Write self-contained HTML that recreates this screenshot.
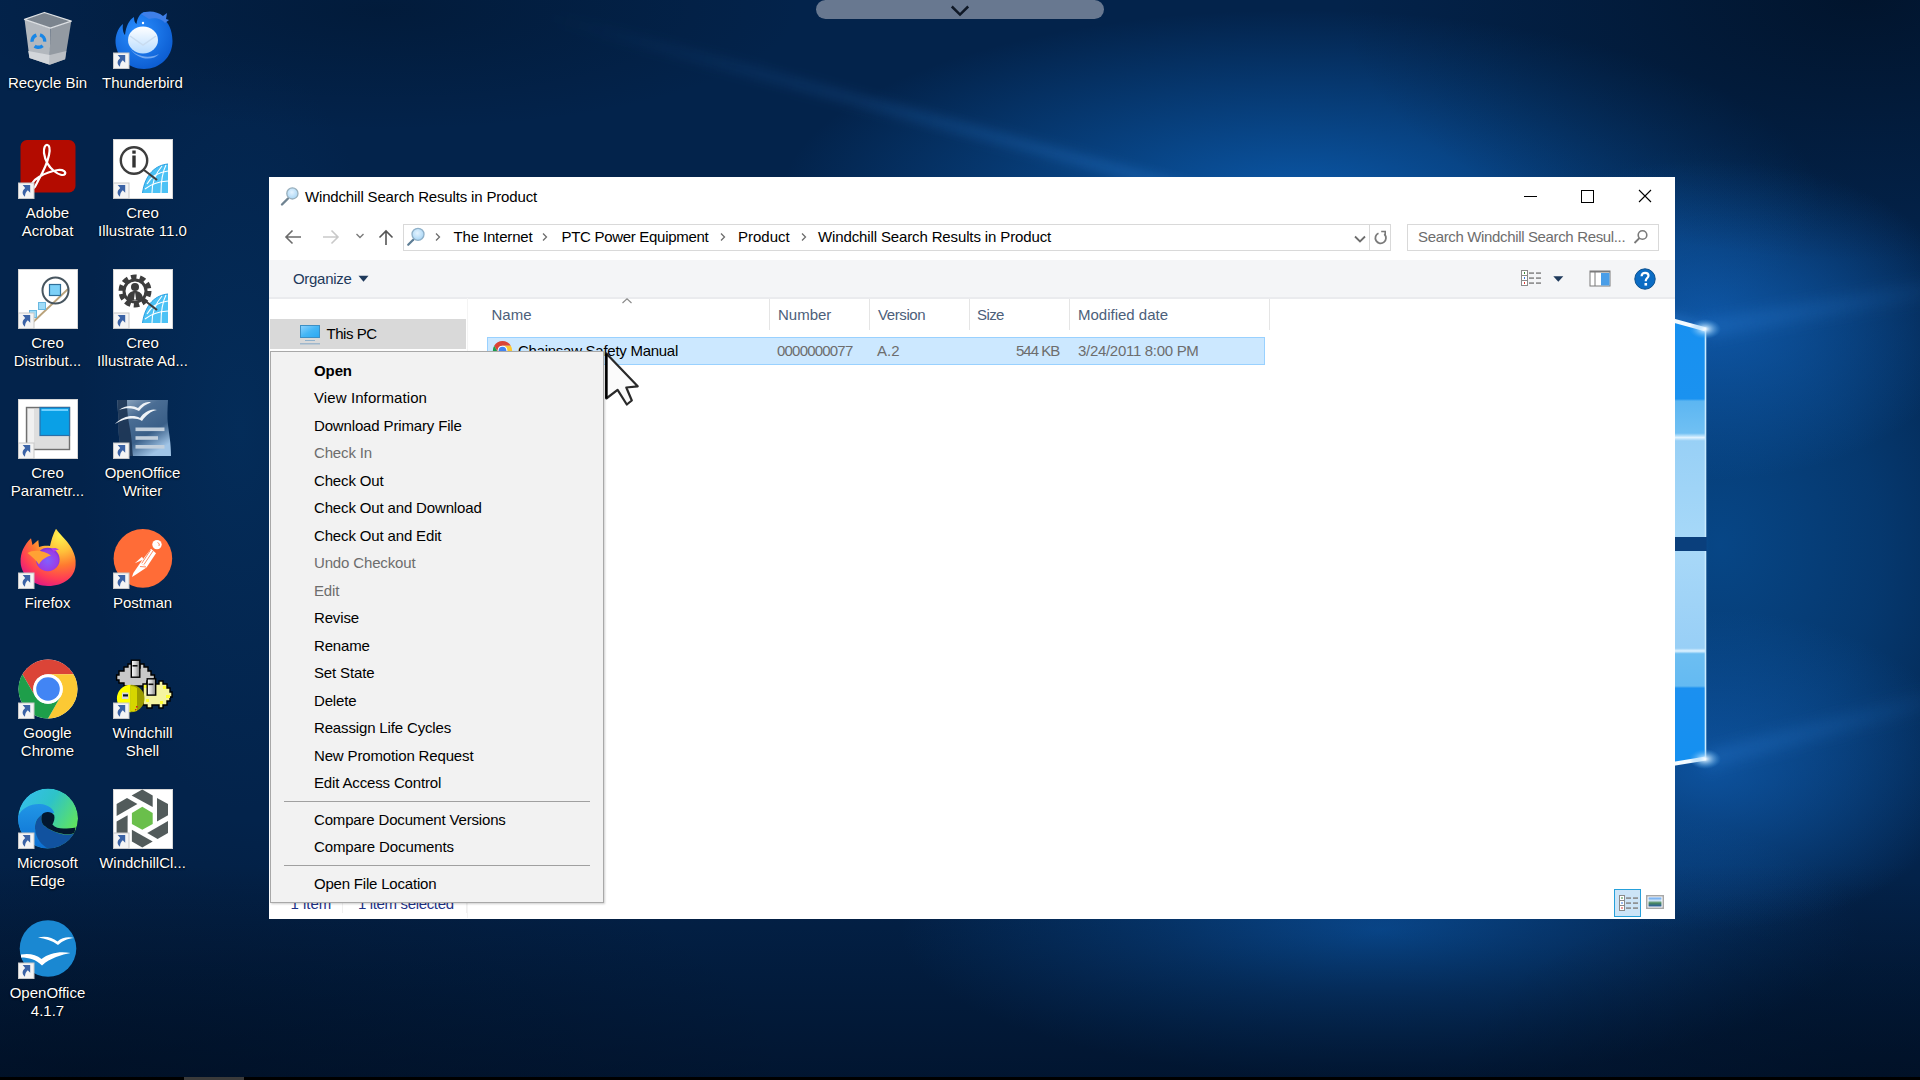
<!DOCTYPE html>
<html><head><meta charset="utf-8">
<style>
*{margin:0;padding:0;box-sizing:border-box}
html,body{width:1920px;height:1080px;overflow:hidden}
body{position:relative;font-family:"Liberation Sans",sans-serif;font-size:15px;color:#000;
background:#021a38;}
.abs{position:absolute}
.t{position:absolute;white-space:nowrap;line-height:1;font-size:15px}
.lbl{position:absolute;width:100px;text-align:center;color:#fff;font-size:15px;line-height:1;white-space:nowrap;text-shadow:0 1px 2px rgba(0,0,0,.9),0 0 1px #000}
.ico{position:absolute;width:60px;height:60px}
#topbar{left:816px;top:0px;width:288px;height:19px;border-radius:9.5px;background:#687890}
#win{left:269px;top:177px;width:1406px;height:742px;background:#fff}
#menu{left:270px;top:351px;width:334px;height:552px;background:#f2f2f2;border:1px solid #a8a8a8;box-shadow:1px 1px 2px rgba(0,0,0,.2)}
.sep{position:absolute;left:284px;width:306px;height:1px;background:#a0a0a0}
.vsep{position:absolute;top:299px;width:1px;height:31px;background:#e5e5e5}
</style></head>
<body>
<div class="abs" style="left:0;top:0;width:1920px;height:1080px;background:
 linear-gradient(to bottom, rgba(0,10,26,0) 80%, rgba(0,10,26,.55) 100%),
 radial-gradient(ellipse 520px 260px at 1860px 0px, rgba(1,18,40,.85), rgba(1,18,40,.4) 50%, rgba(1,18,40,0) 100%),
 radial-gradient(ellipse 260px 160px at 1710px 320px, rgba(18,100,190,.7), rgba(18,100,190,0) 100%),
 radial-gradient(ellipse 260px 160px at 1710px 770px, rgba(18,100,190,.6), rgba(18,100,190,0) 100%),
 radial-gradient(ellipse 700px 260px at 80px 1070px, rgba(1,18,40,.6), rgba(1,18,40,0) 100%),
 radial-gradient(ellipse 420px 200px at 1880px 1080px, rgba(1,18,40,.6), rgba(1,18,40,0) 100%),
 radial-gradient(ellipse 420px 120px at 380px 10px, rgba(1,22,48,.6), rgba(1,22,48,0) 100%),
 radial-gradient(ellipse 520px 190px at 1300px 200px, rgba(11,88,168,1), rgba(11,88,168,.55) 45%, rgba(11,88,168,0) 100%),
 radial-gradient(ellipse 480px 150px at 1380px 930px, rgba(10,80,156,1), rgba(10,80,156,.5) 45%, rgba(10,80,156,0) 100%),
 radial-gradient(ellipse 320px 400px at 1720px 545px, rgba(7,70,134,1), rgba(7,70,134,.6) 50%, rgba(7,70,134,0) 100%),
 radial-gradient(ellipse 160px 380px at 240px 430px, rgba(4,48,95,.7), rgba(4,48,95,0) 100%),
 #03234b;"></div>
<div class="abs" style="left:506px;top:324px;width:1200px;height:10px;transform-origin:100% 50%;transform:rotate(15.1deg);background:linear-gradient(to right, rgba(42,122,208,0), rgba(42,122,208,.45) 60%, rgba(42,122,208,.6));filter:blur(6px)"></div>
<div class="abs" style="left:1706px;top:323px;width:230px;height:12px;transform-origin:0 50%;transform:rotate(-10deg);background:linear-gradient(to right, rgba(42,122,208,.5), rgba(42,122,208,.1));filter:blur(8px)"></div>
<div class="abs" style="left:1706px;top:754px;width:230px;height:12px;transform-origin:0 50%;transform:rotate(-15deg);background:linear-gradient(to right, rgba(42,122,208,.5), rgba(42,122,208,.1));filter:blur(8px)"></div>
<div class="abs" style="left:0;top:1077px;width:1920px;height:3px;background:#000"></div>
<div class="abs" style="left:184px;top:1077px;width:60px;height:3px;background:#3a3a3a"></div>
<!-- windows logo sliver -->
<div class="abs" style="left:1670px;top:300px;width:60px;height:480px;background:radial-gradient(ellipse 40px 230px at 0px 240px, rgba(30,130,230,.6), rgba(30,130,230,0))"></div>
<svg class="abs" style="left:1660px;top:300px" width="70" height="480" viewBox="0 0 70 480">
<defs>
<linearGradient id="wp1" x1="0" y1="0" x2="0" y2="1">
<stop offset="0" stop-color="#1790f0"/><stop offset=".375" stop-color="#1a92f0"/><stop offset=".385" stop-color="#5cb6f2"/><stop offset=".53" stop-color="#70c0f3"/><stop offset=".55" stop-color="#e0f3ff"/><stop offset=".565" stop-color="#98d0f6"/><stop offset="1" stop-color="#a6d8f8"/></linearGradient>
<linearGradient id="wp2" x1="0" y1="0" x2="0" y2="1">
<stop offset="0" stop-color="#a8d8f8"/><stop offset=".45" stop-color="#98cff6"/><stop offset=".463" stop-color="#e0f3ff"/><stop offset=".476" stop-color="#6cbef2"/><stop offset=".625" stop-color="#64baf2"/><stop offset=".635" stop-color="#1b90f0"/><stop offset="1" stop-color="#1490f0"/></linearGradient>
<radialGradient id="glow" cx="50%" cy="50%" r="50%"><stop offset="0" stop-color="#fff" stop-opacity="1"/><stop offset=".3" stop-color="#bfe4ff" stop-opacity=".7"/><stop offset="1" stop-color="#4aa8f0" stop-opacity="0"/></radialGradient>
</defs>
<rect x="0" y="236" width="46.5" height="16" fill="#0a3f7c"/>
<path d="M0 16L46 29V237H0Z" fill="url(#wp1)"/>
<path d="M0 251H46V459L0 467Z" fill="url(#wp2)"/>
<path d="M0 17L46 29.5" stroke="#f4fbff" stroke-width="4"/>
<path d="M0 466L46 458.5" stroke="#f4fbff" stroke-width="4"/>
<line x1="45.5" y1="29" x2="45.5" y2="237" stroke="#c8ebff" stroke-width="1.6"/>
<line x1="45.5" y1="251" x2="45.5" y2="459" stroke="#c8ebff" stroke-width="1.6"/>
<ellipse cx="45" cy="29" rx="16" ry="10" fill="url(#glow)"/>
<ellipse cx="45" cy="459" rx="16" ry="10" fill="url(#glow)"/>
</svg>
<svg class="abs" style="left:17.5px;top:9px;overflow:visible" width="60" height="60" viewBox="0 0 60 60">
<path d="M6.5 10.3L32.3 19.2L31.7 55.7L11.5 49.1Z" fill="#b3b8be"/>
<path d="M32.3 19.2L53.3 12.1L47.1 50.3L31.7 55.7Z" fill="#939aa2"/>
<path d="M6.5 10.3L26.4 3.5L53.3 12.1L32.3 19.2Z" fill="#7b848e" stroke="#dde0e3" stroke-width="1.3" stroke-linejoin="round"/>
<path d="M10.2 42L31.8 46L31.7 55.7L11.5 49.1Z" fill="#d3d6da"/>
<path d="M31.8 46L48.3 42L47.1 50.3L31.7 55.7Z" fill="#babec3"/>
<g transform="translate(20.4,32)"><circle r="6.3" fill="none" stroke="#1886e6" stroke-width="3.4" stroke-dasharray="8.5 4.7" transform="rotate(-75)"/></g>
</svg>
<div class="lbl" style="left:-2.5px;top:74.70px">Recycle Bin</div>
<svg class="abs" style="left:112.5px;top:9px;overflow:visible" width="60" height="60" viewBox="0 0 60 60">
<defs><radialGradient id="tbg" cx="40%" cy="35%" r="70%"><stop offset="0" stop-color="#2a8fff"/><stop offset="1" stop-color="#0b5bd0"/></radialGradient>
<linearGradient id="tbe" x1="0" y1="0" x2="0" y2="1"><stop offset="0" stop-color="#ffffff"/><stop offset="1" stop-color="#b8dcff"/></linearGradient></defs>
<path d="M30.8 3C44 3 59.5 10 59.5 32C59.5 48 47 60 31 60C15 60 2 47 2.5 31C3 24 6 18 10 15C9 21 11 25 12 26C13 17 16 11 21 8C21 12 22 14 23.5 15C24.5 8 27 5 30.8 3Z" fill="url(#tbg)"/>
<path d="M28 5C34 1 44 2 50 7L54 4L53 10L56 11L52 14C49 10 42 8 36 10Z" fill="#3f7fe8"/>
<circle cx="30" cy="14" r="1.2" fill="#fff"/>
<ellipse cx="30" cy="31" rx="15" ry="13.5" fill="url(#tbe)"/>
<path d="M17 27L30 36L43 27" fill="none" stroke="#c9dcf0" stroke-width="1.5"/>
<path d="M16 38C22 48 36 50 46 45C40 52 24 52 16 38Z" fill="#8ab8f5" opacity=".8"/>
<g transform="translate(0,43.5)"><rect x="0.5" y="0.5" width="15.5" height="15.5" fill="#f4f4f4" stroke="#c8c8c8" stroke-width="1"/><path d="M7 14.3C4 12 3.6 8.6 7.2 5.6L4.7 2.6H12.2V10.2L9.8 7.7C7.6 9.6 7 11.6 7 14.3Z" fill="#3b63a6"/></g></svg>
<div class="lbl" style="left:92.5px;top:74.70px">Thunderbird</div>
<svg class="abs" style="left:17.5px;top:139px;overflow:visible" width="60" height="60" viewBox="0 0 60 60">
<rect x="2.5" y="1" width="55" height="52.5" rx="6.5" fill="#b30b00"/>
<path d="M14.5 49C12 47 14 42 21 38C26 35 33 32 40 31C46 30.5 48 33 47 35C45.5 37 41 36 36 32C31 28 27 21 26 14C25.5 9 27 5.5 29.5 6C32 6.5 32 11 31 16C29.5 23 25 33 21 40C18 46 16.5 50 14.5 49Z" fill="none" stroke="#fff" stroke-width="2.2" stroke-linejoin="round"/>
<g transform="translate(0,43.5)"><rect x="0.5" y="0.5" width="15.5" height="15.5" fill="#f4f4f4" stroke="#c8c8c8" stroke-width="1"/><path d="M7 14.3C4 12 3.6 8.6 7.2 5.6L4.7 2.6H12.2V10.2L9.8 7.7C7.6 9.6 7 11.6 7 14.3Z" fill="#3b63a6"/></g></svg>
<div class="lbl" style="left:-2.5px;top:204.70px">Adobe</div>
<div class="lbl" style="left:-2.5px;top:223.45px">Acrobat</div>
<svg class="abs" style="left:112.5px;top:139px;overflow:visible" width="60" height="60" viewBox="0 0 60 60">
<rect x="0.5" y="0.5" width="59" height="59" fill="#fff" stroke="#d6d6d6"/>
<g transform="translate(29,23)"><path d="M26 2C14 3 3 12 0.5 31H26Z" fill="#4cc2f5"/><g stroke="#fff" stroke-width="1.1" fill="none"><path d="M26 9C17 10 9 15 5 22"/><path d="M26 19C18 19.5 9 22 3 27"/><path d="M10 31C10 20 14 11 20 4"/><path d="M19 31C19 21 20 11 24 3"/></g><path d="M26 2C14 3 3 12 0.5 31" fill="none" stroke="#2a9ee0" stroke-width="1"/></g>
<circle cx="21" cy="21.5" r="13.2" fill="none" stroke="#3d3d3d" stroke-width="2.4"/>
<line x1="31" y1="31" x2="44" y2="41" stroke="#3d3d3d" stroke-width="2.2"/>
<rect x="19.3" y="11.5" width="3.4" height="3.2" fill="#333"/><rect x="19.3" y="16.5" width="3.4" height="12" fill="#333"/>
<g transform="translate(0,43.5)"><rect x="0.5" y="0.5" width="15.5" height="15.5" fill="#f4f4f4" stroke="#c8c8c8" stroke-width="1"/><path d="M7 14.3C4 12 3.6 8.6 7.2 5.6L4.7 2.6H12.2V10.2L9.8 7.7C7.6 9.6 7 11.6 7 14.3Z" fill="#3b63a6"/></g></svg>
<div class="lbl" style="left:92.5px;top:204.70px">Creo</div>
<div class="lbl" style="left:92.5px;top:223.45px">Illustrate 11.0</div>
<svg class="abs" style="left:17.5px;top:269px;overflow:visible" width="60" height="60" viewBox="0 0 60 60">
<rect x="0.5" y="0.5" width="59" height="59" fill="#fff" stroke="#d6d6d6"/>
<line x1="12" y1="56" x2="50" y2="20" stroke="#b9a27a" stroke-width="1.8"/>
<rect x="11.5" y="41.5" width="7" height="7" fill="#9fdcf8" stroke="#6ab8e0"/>
<rect x="20.5" y="33.5" width="7" height="7" fill="#9fdcf8" stroke="#6ab8e0"/>
<rect x="31.5" y="15.5" width="11" height="11" fill="#7cd0f7" stroke="#2f6f99" stroke-width="1.2"/>
<circle cx="37.5" cy="21.5" r="13" fill="none" stroke="#47555f" stroke-width="2"/>
<g transform="translate(0,43.5)"><rect x="0.5" y="0.5" width="15.5" height="15.5" fill="#f4f4f4" stroke="#c8c8c8" stroke-width="1"/><path d="M7 14.3C4 12 3.6 8.6 7.2 5.6L4.7 2.6H12.2V10.2L9.8 7.7C7.6 9.6 7 11.6 7 14.3Z" fill="#3b63a6"/></g></svg>
<div class="lbl" style="left:-2.5px;top:334.70px">Creo</div>
<div class="lbl" style="left:-2.5px;top:353.45px">Distribut...</div>
<svg class="abs" style="left:112.5px;top:269px;overflow:visible" width="60" height="60" viewBox="0 0 60 60">
<rect x="0.5" y="0.5" width="59" height="59" fill="#fff" stroke="#d6d6d6"/>
<g transform="translate(29,23)"><path d="M26 2C14 3 3 12 0.5 31H26Z" fill="#4cc2f5"/><g stroke="#fff" stroke-width="1.1" fill="none"><path d="M26 9C17 10 9 15 5 22"/><path d="M26 19C18 19.5 9 22 3 27"/><path d="M10 31C10 20 14 11 20 4"/><path d="M19 31C19 21 20 11 24 3"/></g><path d="M26 2C14 3 3 12 0.5 31" fill="none" stroke="#2a9ee0" stroke-width="1"/></g>
<g transform="translate(22,22)"><g fill="#3d3d3d">
<circle r="14" fill="none" stroke="#3d3d3d" stroke-width="5" stroke-dasharray="5.5 3.3"/>
<circle r="11" fill="none" stroke="#3d3d3d" stroke-width="3"/>
<circle cx="0" cy="-4" r="4"/><path d="M-8 9C-8 2 -4 0 0 0C4 0 8 2 8 9Z"/></g>
<path d="M0 1L-1 8L0 9L1 8Z" fill="#fff"/></g>
<line x1="31" y1="31" x2="44" y2="41" stroke="#3d3d3d" stroke-width="2.2"/>
<g transform="translate(0,43.5)"><rect x="0.5" y="0.5" width="15.5" height="15.5" fill="#f4f4f4" stroke="#c8c8c8" stroke-width="1"/><path d="M7 14.3C4 12 3.6 8.6 7.2 5.6L4.7 2.6H12.2V10.2L9.8 7.7C7.6 9.6 7 11.6 7 14.3Z" fill="#3b63a6"/></g></svg>
<div class="lbl" style="left:92.5px;top:334.70px">Creo</div>
<div class="lbl" style="left:92.5px;top:353.45px">Illustrate Ad...</div>
<svg class="abs" style="left:17.5px;top:399px;overflow:visible" width="60" height="60" viewBox="0 0 60 60">
<rect x="0.5" y="0.5" width="59" height="59" fill="#fff" stroke="#d6d6d6"/>
<rect x="8.5" y="8.5" width="43" height="42" fill="#dedede" stroke="#707070" stroke-width="1.4"/>
<rect x="10" y="10" width="6" height="39" fill="#f0f0f0"/>
<rect x="22" y="8.5" width="29.5" height="28" fill="#0aa0e6" stroke="#2a6fa8" stroke-width="1.2"/>
<rect x="23.5" y="10" width="26.5" height="2" fill="#6fd0ff"/>
<g transform="translate(0,43.5)"><rect x="0.5" y="0.5" width="15.5" height="15.5" fill="#f4f4f4" stroke="#c8c8c8" stroke-width="1"/><path d="M7 14.3C4 12 3.6 8.6 7.2 5.6L4.7 2.6H12.2V10.2L9.8 7.7C7.6 9.6 7 11.6 7 14.3Z" fill="#3b63a6"/></g></svg>
<div class="lbl" style="left:-2.5px;top:464.70px">Creo</div>
<div class="lbl" style="left:-2.5px;top:483.45px">Parametr...</div>
<svg class="abs" style="left:112.5px;top:399px;overflow:visible" width="60" height="60" viewBox="0 0 60 60">
<defs><linearGradient id="oow" x1="0" y1="0" x2=".6" y2="1"><stop offset="0" stop-color="#9ab0c6"/><stop offset=".35" stop-color="#4a6d94"/><stop offset=".7" stop-color="#3a5f88"/><stop offset="1" stop-color="#a0c4e6"/></linearGradient></defs>
<path d="M4.5 1H55C54.5 10 54 18 55 26C56 34 58 44 58 57H9C7 46 5 34 5 24C6 16 4 8 4.5 1Z" fill="url(#oow)"/>
<path d="M4.5 1H14C14 12 15 20 17 30C19 40 19 50 20 57H9C7 46 5 34 5 24C6 16 4 8 4.5 1Z" fill="#1b3352" opacity=".9"/>
<g fill="#c2cfdc"><rect x="22.5" y="28.5" width="29" height="3.6"/><rect x="22.5" y="37.2" width="22.5" height="3.6"/><rect x="22.5" y="46" width="29" height="3.6"/></g>
<path d="M6 11C12 6 20 6 25 9C29 4 34 2 38 3.5C33 5 29 8 26 12C21 9 13 8 6 11Z" fill="#eef2f6"/>
<path d="M2 25C10 17 20 15 27 19C31 13 38 9 44 11C38 12 33 16 29 22C22 18 12 19 2 25Z" fill="#eef2f6"/>
<g transform="translate(0,43.5)"><rect x="0.5" y="0.5" width="15.5" height="15.5" fill="#f4f4f4" stroke="#c8c8c8" stroke-width="1"/><path d="M7 14.3C4 12 3.6 8.6 7.2 5.6L4.7 2.6H12.2V10.2L9.8 7.7C7.6 9.6 7 11.6 7 14.3Z" fill="#3b63a6"/></g></svg>
<div class="lbl" style="left:92.5px;top:464.70px">OpenOffice</div>
<div class="lbl" style="left:92.5px;top:483.45px">Writer</div>
<svg class="abs" style="left:17.5px;top:529px;overflow:visible" width="60" height="60" viewBox="0 0 60 60">
<defs><radialGradient id="ffa" cx="72%" cy="12%" r="95%"><stop offset="0" stop-color="#fff44f"/><stop offset=".3" stop-color="#ffc03a"/><stop offset=".55" stop-color="#ff7a30"/><stop offset=".8" stop-color="#ff3d55"/><stop offset="1" stop-color="#e01884"/></radialGradient>
<radialGradient id="ffp" cx="50%" cy="55%" r="60%"><stop offset="0" stop-color="#8060ff"/><stop offset=".7" stop-color="#9a3ee6"/><stop offset="1" stop-color="#6a2ad0"/></radialGradient></defs>
<path d="M38 -0.3C44 8 50 12 54 20C57 26 58 30 57.6 36C57 48 46 57 30 57C15 57 3 46 2.6 33C2.3 24 6 16 13 9.2L14.5 16L20.3 11L21 18C24 17 28 16.5 32 17C33 12 35 5 38 -0.3Z" fill="url(#ffa)"/>
<circle cx="29.8" cy="30.5" r="11.8" fill="url(#ffp)"/>
<path d="M33 19.5C36 18.5 39 19 41 20.5C38 21 36.5 22 36 23Z" fill="#b040e8"/>
<path d="M9.5 24C15 20.5 26 21 33 26.5C28 28 23.5 30.5 21 35.5C18 31 14 28 9.5 24Z" fill="#ffa234"/>
<g transform="translate(0,43.5)"><rect x="0.5" y="0.5" width="15.5" height="15.5" fill="#f4f4f4" stroke="#c8c8c8" stroke-width="1"/><path d="M7 14.3C4 12 3.6 8.6 7.2 5.6L4.7 2.6H12.2V10.2L9.8 7.7C7.6 9.6 7 11.6 7 14.3Z" fill="#3b63a6"/></g></svg>
<div class="lbl" style="left:-2.5px;top:594.70px">Firefox</div>
<svg class="abs" style="left:112.5px;top:529px;overflow:visible" width="60" height="60" viewBox="0 0 60 60">
<circle cx="29.9" cy="29.4" r="29.3" fill="#ff6c37"/>
<g fill="#fff">
<circle cx="44" cy="15.6" r="4.7"/>
<path d="M38 19.8L43 24.2L33.5 38.5L27.5 33.5Z"/>
<path d="M33.5 38.5L23 45.5L19 48L20.3 44L27.5 33.5Z"/>
<path d="M21.8 34.3L29 27.8L30.6 30.5Z"/>
</g>
<g stroke="#ff6c37" stroke-width=".8" fill="none"><path d="M40 22L31 35.5"/><path d="M37.5 21L29 34"/><path d="M27 37.5L33 38"/><path d="M44.5 13.5A2.5 2.5 0 0 1 46 17"/></g>
<g transform="translate(0,43.5)"><rect x="0.5" y="0.5" width="15.5" height="15.5" fill="#f4f4f4" stroke="#c8c8c8" stroke-width="1"/><path d="M7 14.3C4 12 3.6 8.6 7.2 5.6L4.7 2.6H12.2V10.2L9.8 7.7C7.6 9.6 7 11.6 7 14.3Z" fill="#3b63a6"/></g></svg>
<div class="lbl" style="left:92.5px;top:594.70px">Postman</div>
<svg class="abs" style="left:17.5px;top:659px;overflow:visible" width="60" height="60" viewBox="0 0 60 60">
<circle cx="30" cy="30" r="29.5" fill="#fff"/>
<g transform="translate(30,30) scale(1.475) translate(-24,-24)">
<path d="M6.68 14A20 20 0 0 1 41.32 14H24A10 10 0 0 0 15.34 29Z" fill="#db4437"/>
<path d="M41.32 14A20 20 0 0 1 24 44L32.66 29A10 10 0 0 0 24 14Z" fill="#fcc934"/>
<path d="M24 44A20 20 0 0 1 6.68 14L15.34 29A10 10 0 0 0 32.66 29Z" fill="#1e9e4a"/>
<circle cx="24" cy="24" r="10" fill="#fff"/><circle cx="24" cy="24" r="8" fill="#4285f4"/>
</g>
<g transform="translate(0,43.5)"><rect x="0.5" y="0.5" width="15.5" height="15.5" fill="#f4f4f4" stroke="#c8c8c8" stroke-width="1"/><path d="M7 14.3C4 12 3.6 8.6 7.2 5.6L4.7 2.6H12.2V10.2L9.8 7.7C7.6 9.6 7 11.6 7 14.3Z" fill="#3b63a6"/></g></svg>
<div class="lbl" style="left:-2.5px;top:724.70px">Google</div>
<div class="lbl" style="left:-2.5px;top:743.45px">Chrome</div>
<svg class="abs" style="left:112.5px;top:659px;overflow:visible" width="60" height="60" viewBox="0 0 60 60">
<defs><linearGradient id="cyl" x1="0" y1="0" x2="1" y2="0"><stop offset="0" stop-color="#ffffff"/><stop offset=".5" stop-color="#d0d0d0"/><stop offset="1" stop-color="#808080"/></linearGradient></defs>
<g stroke="#000" stroke-width="1.4">
<path d="M11 8H15V5H19V9H27V5H31V8H35V12H38V16H41.5V21H38V24H34V27H11V24H6V21H3.6V16H6V12H11Z" fill="#c8c8c8"/>
<path d="M30 25H34V22H39V25H46V22H50V25H54V29H57V33H59V38H57V42H54V46H50V49H46V46H39V49H34V46H30Z" fill="#f4f4a0"/>
</g>
<g fill="#ffff30"><rect x="31" y="26" width="3" height="3"/><rect x="50" y="27" width="3" height="3"/><rect x="53" y="36" width="4" height="3"/><rect x="47" y="42" width="3" height="3"/><rect x="33" y="40" width="3" height="3"/></g>
<rect x="18.3" y="1.2" width="8.5" height="17" fill="url(#cyl)" stroke="#000" stroke-width="1.4"/>
<rect x="19.5" y="6" width="5" height="1.6" fill="#111"/>
<rect x="34.2" y="19.8" width="8.5" height="16.3" fill="url(#cyl)" stroke="#000" stroke-width="1.4"/>
<rect x="35.4" y="24.5" width="5" height="1.6" fill="#111"/>
<path d="M17.7 25.7A13.8 13.8 0 0 1 17.7 53.3Z" fill="#9c9c00"/>
<path d="M17.7 25.7A13.8 13.8 0 0 0 17.7 53.3Z" fill="#ffff00"/>
<path d="M17.7 27A12.5 12.5 0 0 1 24 29L24 52A12.5 12.5 0 0 1 17.7 52Z" fill="#f0f000" opacity=".7"/>
<rect x="9" y="33.5" width="6.5" height="6.5" fill="#d8d8d8"/>
<rect x="10" y="35.3" width="5" height="2.2" fill="#0a1a30"/>
<rect x="23" y="47" width="1.6" height="1.6" fill="#d02020"/><rect x="22" y="50" width="1.4" height="1.4" fill="#d02020"/>
<g transform="translate(0,43.5)"><rect x="0.5" y="0.5" width="15.5" height="15.5" fill="#f4f4f4" stroke="#c8c8c8" stroke-width="1"/><path d="M7 14.3C4 12 3.6 8.6 7.2 5.6L4.7 2.6H12.2V10.2L9.8 7.7C7.6 9.6 7 11.6 7 14.3Z" fill="#3b63a6"/></g></svg>
<div class="lbl" style="left:92.5px;top:724.70px">Windchill</div>
<div class="lbl" style="left:92.5px;top:743.45px">Shell</div>
<svg class="abs" style="left:17.5px;top:789px;overflow:visible" width="60" height="60" viewBox="0 0 60 60">
<defs><linearGradient id="eg1" x1="0" y1="0" x2="1" y2=".6"><stop offset="0" stop-color="#37bdf4"/><stop offset=".5" stop-color="#2ec3c8"/><stop offset="1" stop-color="#62e55a"/></linearGradient>
<linearGradient id="eg2" x1="0" y1="0" x2="0" y2="1"><stop offset="0" stop-color="#2196e6"/><stop offset="1" stop-color="#0c6fd2"/></linearGradient>
<clipPath id="ecl"><circle cx="30" cy="29.5" r="30"/></clipPath></defs>
<g clip-path="url(#ecl)">
<circle cx="30" cy="29.5" r="30" fill="url(#eg1)"/>
<path d="M-1 31C1 20 12 14.5 22 15C30 15.5 35 19.5 36.2 24L24 26C20 28 17 32 17 37C17 47 24 56 31 60L-1 60Z" fill="url(#eg2)"/>
<path d="M24 25.5C18.5 29 16.8 34 17 39.5C17.5 49 24 57 31 60L60 60L56 44.5C52 46 46 46 40 44C33 41.5 27 38 24.6 34.9C23 32 23 28 24 25.5Z" fill="#11529f"/>
<path d="M24 25.7C26 22.5 33 21.5 36.2 26.3C37 29 36 33 34.4 35.5C37 38.5 41 39.5 45.4 39.6C50 39.6 54 39 57.5 38.5L56.5 44C52 46 45 45.5 39.3 43.5C33 41.5 27 38 24.6 34.9C23 32 23 28 24 25.7Z" fill="#02172f"/>
</g>
<g transform="translate(0,43.5)"><rect x="0.5" y="0.5" width="15.5" height="15.5" fill="#f4f4f4" stroke="#c8c8c8" stroke-width="1"/><path d="M7 14.3C4 12 3.6 8.6 7.2 5.6L4.7 2.6H12.2V10.2L9.8 7.7C7.6 9.6 7 11.6 7 14.3Z" fill="#3b63a6"/></g></svg>
<div class="lbl" style="left:-2.5px;top:854.70px">Microsoft</div>
<div class="lbl" style="left:-2.5px;top:873.45px">Edge</div>
<svg class="abs" style="left:112.5px;top:789px;overflow:visible" width="60" height="60" viewBox="0 0 60 60">
<rect x="0.5" y="0.5" width="59" height="59" fill="#fff" stroke="#d6d6d6"/>
<g fill="#525b5b">
<path d="M18.6 6.5L29.3 0.5L39.7 6.6V18.1Z"/>
<path d="M44 8.9L55 15V26.3L44 32.5Z"/>
<path d="M34.2 44.1L55 32.1V44.1L44.6 49.9Z"/>
<path d="M18.9 40.7L39.7 52.6L29.3 58.5L18.9 52.6Z"/>
<path d="M3.6 32.5L14.6 26.3V50L3.6 44Z"/>
<path d="M3.6 15L14 8.9L24.4 15L3.6 27Z"/>
</g>
<path d="M29.3 17.8L39.7 23.9V34.9L29.3 40.7L18.9 34.9V23.9Z" fill="#6abf4b"/>
<g transform="translate(0,43.5)"><rect x="0.5" y="0.5" width="15.5" height="15.5" fill="#f4f4f4" stroke="#c8c8c8" stroke-width="1"/><path d="M7 14.3C4 12 3.6 8.6 7.2 5.6L4.7 2.6H12.2V10.2L9.8 7.7C7.6 9.6 7 11.6 7 14.3Z" fill="#3b63a6"/></g></svg>
<div class="lbl" style="left:92.5px;top:854.70px">WindchillCl...</div>
<svg class="abs" style="left:17.5px;top:919px;overflow:visible" width="60" height="60" viewBox="0 0 60 60">
<circle cx="30" cy="29.5" r="28.3" fill="#1a88d2"/>
<path d="M20 18.5C27 16.5 34 18 39.5 22.5C44 18.5 50 17.5 56 19C50 19.5 45 21.5 40 26C34 21.5 27 19.5 20 18.5Z" fill="#fff"/>
<path d="M3 35.5C11 34 18 35.5 23.5 40C31 34 42 32 52.5 34C44 35.5 32 39 24 46.5C18 40.5 11 38.5 3 38.5Z" fill="#fff"/>
<g transform="translate(0,43.5)"><rect x="0.5" y="0.5" width="15.5" height="15.5" fill="#f4f4f4" stroke="#c8c8c8" stroke-width="1"/><path d="M7 14.3C4 12 3.6 8.6 7.2 5.6L4.7 2.6H12.2V10.2L9.8 7.7C7.6 9.6 7 11.6 7 14.3Z" fill="#3b63a6"/></g></svg>
<div class="lbl" style="left:-2.5px;top:984.70px">OpenOffice</div>
<div class="lbl" style="left:-2.5px;top:1003.45px">4.1.7</div>
<div id="win" class="abs"></div>
<!-- title bar -->
<svg class="abs" style="left:279px;top:185px" width="22" height="22" viewBox="0 0 22 22">
 <defs><radialGradient id="mg" cx="45%" cy="40%" r="60%"><stop offset="0" stop-color="#e4f3ff"/><stop offset="1" stop-color="#a9d6f5"/></radialGradient></defs>
 <line x1="3" y1="19.5" x2="9" y2="13.5" stroke="#6f8391" stroke-width="2.4" stroke-linecap="round"/>
 <circle cx="13.4" cy="8.4" r="5.6" fill="url(#mg)" stroke="#98aebb" stroke-width="1.3"/>
</svg>
<div class="t" style="left:305px;top:189px;letter-spacing:-0.16px">Windchill Search Results in Product</div>
<div class="abs" style="left:1524px;top:196px;width:13px;height:1px;background:#000"></div>
<div class="abs" style="left:1581px;top:190px;width:13px;height:13px;border:1px solid #000"></div>
<svg class="abs" style="left:1638px;top:189px" width="14" height="14" viewBox="0 0 14 14"><path d="M1 1L13 13M13 1L1 13" stroke="#000" stroke-width="1.1"/></svg>

<!-- nav buttons -->
<svg class="abs" style="left:284px;top:229px" width="18" height="16" viewBox="0 0 18 16"><path d="M2 8H17M8.5 1.5L2 8L8.5 14.5" fill="none" stroke="#6b6b6b" stroke-width="1.6"/></svg>
<svg class="abs" style="left:322px;top:229px" width="18" height="16" viewBox="0 0 18 16"><path d="M1 8H16M9.5 1.5L16 8L9.5 14.5" fill="none" stroke="#c9c9c9" stroke-width="1.6"/></svg>
<svg class="abs" style="left:355px;top:232px" width="10" height="8" viewBox="0 0 10 8"><path d="M1.5 2L5 5.5L8.5 2" fill="none" stroke="#7a7a7a" stroke-width="1.4"/></svg>
<svg class="abs" style="left:378px;top:229px" width="16" height="17" viewBox="0 0 16 17"><path d="M8 16V2M1.5 8.5L8 2L14.5 8.5" fill="none" stroke="#555" stroke-width="1.6"/></svg>

<!-- address bar -->
<div class="abs" style="left:403px;top:224px;width:988px;height:27px;border:1px solid #d9d9d9"></div>
<div class="abs" style="left:1369px;top:225px;width:1px;height:25px;background:#d9d9d9"></div>
<svg class="abs" style="left:406px;top:226px" width="20" height="21" viewBox="0 0 20 21">
 <line x1="2.2" y1="18.8" x2="7.5" y2="13.5" stroke="#5d7d95" stroke-width="2.2" stroke-linecap="round"/>
 <circle cx="12" cy="8.3" r="6" fill="url(#mg)" stroke="#8fb0c8" stroke-width="1.3"/>
</svg>
<svg class="abs" style="left:434px;top:232px" width="8" height="10" viewBox="0 0 8 10"><path d="M2 1.5L5.5 5L2 8.5" fill="none" stroke="#6d6d6d" stroke-width="1.3"/></svg>
<div class="t" style="left:453.5px;top:229px;letter-spacing:-0.15px">The Internet</div>
<svg class="abs" style="left:541px;top:232px" width="8" height="10" viewBox="0 0 8 10"><path d="M2 1.5L5.5 5L2 8.5" fill="none" stroke="#6d6d6d" stroke-width="1.3"/></svg>
<div class="t" style="left:561.5px;top:229px;letter-spacing:-0.3px">PTC Power Equipment</div>
<svg class="abs" style="left:719px;top:232px" width="8" height="10" viewBox="0 0 8 10"><path d="M2 1.5L5.5 5L2 8.5" fill="none" stroke="#6d6d6d" stroke-width="1.3"/></svg>
<div class="t" style="left:738px;top:229px">Product</div>
<svg class="abs" style="left:800px;top:232px" width="8" height="10" viewBox="0 0 8 10"><path d="M2 1.5L5.5 5L2 8.5" fill="none" stroke="#6d6d6d" stroke-width="1.3"/></svg>
<div class="t" style="left:818px;top:229px;letter-spacing:-0.13px">Windchill Search Results in Product</div>
<svg class="abs" style="left:1353px;top:234px" width="14" height="10" viewBox="0 0 14 10"><path d="M2 2.5L7 7.5L12 2.5" fill="none" stroke="#6d6d6d" stroke-width="1.8"/></svg>
<svg class="abs" style="left:1373px;top:230px" width="16" height="16" viewBox="0 0 16 16"><path d="M11.3 4.2A5.3 5.3 0 1 1 5.5 3.2" fill="none" stroke="#7a7a7a" stroke-width="1.8"/><path d="M8.2 1.5H12.2V5.5" fill="none" stroke="#7a7a7a" stroke-width="1.6"/></svg>

<!-- search box -->
<div class="abs" style="left:1407px;top:224px;width:252px;height:27px;border:1px solid #d9d9d9"></div>
<div class="t" style="left:1418px;top:229px;color:#6d6d6d;letter-spacing:-0.35px">Search Windchill Search Resul...</div>
<svg class="abs" style="left:1632px;top:228px" width="18" height="18" viewBox="0 0 18 18"><circle cx="10.5" cy="7" r="4.3" fill="none" stroke="#7a7a7a" stroke-width="1.6"/><line x1="2.5" y1="15" x2="7.5" y2="10" stroke="#7a7a7a" stroke-width="1.8"/></svg>

<!-- command bar -->
<div class="abs" style="left:269px;top:260px;width:1406px;height:39px;background:#f4f5f7;border-bottom:2px solid #eaebee"></div>
<div class="t" style="left:293px;top:270.5px;color:#1e395b;letter-spacing:-0.3px">Organize</div>
<svg class="abs" style="left:358px;top:275px" width="11" height="8" viewBox="0 0 11 8"><path d="M0.5 0.8H10.5L5.5 6.8Z" fill="#1e395b"/></svg>
<!-- view icon -->
<svg class="abs" style="left:1520px;top:269px" width="23" height="18" viewBox="0 0 23 18">
 <rect x="1.5" y="1.5" width="6" height="15" fill="#fff" stroke="#8a8a8a" stroke-width="1"/>
 <line x1="1.5" y1="6.5" x2="7.5" y2="6.5" stroke="#8a8a8a"/><line x1="1.5" y1="11.5" x2="7.5" y2="11.5" stroke="#8a8a8a"/>
 <rect x="4" y="3" width="1" height="2" fill="#3a8a3a"/><rect x="4" y="8" width="1" height="2" fill="#3a7ae0"/><rect x="4" y="13" width="1" height="2" fill="#e03a3a"/>
 <g fill="#8a8a8a"><rect x="9" y="3.3" width="5" height="1.6"/><rect x="16" y="3.3" width="5" height="1.6"/><rect x="9" y="8.3" width="5" height="1.6"/><rect x="16" y="8.3" width="5" height="1.6"/><rect x="9" y="13.3" width="5" height="1.6"/><rect x="16" y="13.3" width="5" height="1.6"/></g>
</svg>
<svg class="abs" style="left:1553px;top:276px" width="11" height="7" viewBox="0 0 11 7"><path d="M0.3 0.3H10.3L5.3 5.8Z" fill="#1e395b"/></svg>
<svg class="abs" style="left:1589px;top:270px" width="22" height="17" viewBox="0 0 22 17">
 <rect x="1" y="1" width="20" height="15" fill="#fff" stroke="#7b7b7b" stroke-width="1"/>
 <rect x="1" y="1" width="20" height="1.5" fill="#7b7b7b"/>
 <line x1="6" y1="2" x2="6" y2="16" stroke="#7b7b7b"/>
 <rect x="12" y="3" width="8.5" height="12.5" fill="#4a9ee8"/>
</svg>
<svg class="abs" style="left:1634px;top:268px" width="22" height="22" viewBox="0 0 22 22">
 <circle cx="11" cy="11" r="10.2" fill="#0b6cc4" stroke="#0a4f8e" stroke-width="1"/>
 <path d="M7.6 8.2C7.6 6 9.2 4.8 11.1 4.8C13.1 4.8 14.5 6 14.5 7.8C14.5 9.9 11.8 10.3 11.8 12.6V13.3" fill="none" stroke="#fff" stroke-width="2.2"/>
 <rect x="10.5" y="15" width="2.6" height="2.6" fill="#fff"/>
</svg>

<!-- nav pane -->
<div class="abs" style="left:270px;top:319px;width:196px;height:30px;background:#d9d9d9"></div>
<div class="abs" style="left:467px;top:298px;width:1px;height:620px;background:#f4f4f4"></div>
<svg class="abs" style="left:299px;top:324px" width="22" height="22" viewBox="0 0 22 22">
 <defs><linearGradient id="scr" x1="0" y1="0" x2="1" y2="1"><stop offset="0" stop-color="#8fd3ff"/><stop offset=".5" stop-color="#45b6f5"/><stop offset="1" stop-color="#2aa8f2"/></linearGradient></defs>
 <rect x="1.5" y="1.5" width="19" height="12" fill="url(#scr)" stroke="#3d8fc4" stroke-width="1"/>
 <rect x="6" y="16" width="10" height="1" fill="#8fb1cc"/>
 <rect x="1" y="19" width="20" height="1.5" fill="#9fb7cc"/>
</svg>
<div class="t" style="left:326.5px;top:325.5px;letter-spacing:-0.45px">This PC</div>

<!-- column headers -->
<svg class="abs" style="left:621px;top:297px" width="12" height="8" viewBox="0 0 12 8"><path d="M1.5 6L6 1.8L10.5 6" fill="none" stroke="#8a8a8a" stroke-width="1.2"/></svg>
<div class="t" style="left:491.5px;top:307px;color:#4c607a">Name</div>
<div class="vsep" style="left:769px"></div>
<div class="t" style="left:778px;top:307px;color:#4c607a">Number</div>
<div class="vsep" style="left:869px"></div>
<div class="t" style="left:878px;top:307px;color:#4c607a;letter-spacing:-0.4px">Version</div>
<div class="vsep" style="left:969px"></div>
<div class="t" style="left:977px;top:307px;color:#4c607a;letter-spacing:-0.6px">Size</div>
<div class="vsep" style="left:1069px"></div>
<div class="t" style="left:1078px;top:307px;color:#4c607a">Modified date</div>
<div class="vsep" style="left:1269px"></div>

<!-- selected row -->
<div class="abs" style="left:487px;top:337px;width:778px;height:28px;background:#cce8ff;border:1px solid #99d1ff"></div>
<svg class="abs" style="left:492px;top:340px" width="21" height="21" viewBox="0 0 48 48">
<g transform="translate(24,24) scale(1.1) translate(-24,-24)">
<path d="M6.68 14A20 20 0 0 1 41.32 14H24A10 10 0 0 0 15.34 29Z" fill="#db4437"/>
<path d="M41.32 14A20 20 0 0 1 24 44L32.66 29A10 10 0 0 0 24 14Z" fill="#fcc934"/>
<path d="M24 44A20 20 0 0 1 6.68 14L15.34 29A10 10 0 0 0 32.66 29Z" fill="#1e9e4a"/>
<circle cx="24" cy="24" r="10" fill="#fff"/><circle cx="24" cy="24" r="8" fill="#4285f4"/></g>
</svg>
<div class="t" style="left:518px;top:342.5px;letter-spacing:-0.27px">Chainsaw Safety Manual</div>
<div class="t" style="left:777px;top:342.5px;color:#6d6d6d;letter-spacing:-0.8px">0000000077</div>
<div class="t" style="left:877px;top:342.5px;color:#6d6d6d">A.2</div>
<div class="t" style="left:1016px;top:342.5px;color:#6d6d6d;letter-spacing:-1px">544 KB</div>
<div class="t" style="left:1078px;top:342.5px;color:#6d6d6d;letter-spacing:-0.3px">3/24/2011 8:00 PM</div>

<!-- status bar -->
<div class="t" style="left:290.5px;top:895.5px;color:#1e3287">1 item</div>
<div class="abs" style="left:342px;top:896px;width:1px;height:17px;background:#f0f0f0"></div>
<div class="t" style="left:358px;top:895.5px;color:#1e3287;letter-spacing:-0.35px">1 item selected</div>
<div class="abs" style="left:466px;top:896px;width:1px;height:17px;background:#f0f0f0"></div>
<div class="abs" style="left:1614px;top:889px;width:27px;height:28px;background:#cce4f7;border:1px solid #26a0da"></div>
<svg class="abs" style="left:1618px;top:894px" width="21" height="18" viewBox="0 0 21 18">
 <rect x="1.5" y="1.5" width="5" height="15" fill="#fff" stroke="#8a8a8a" stroke-width="1"/>
 <line x1="1.5" y1="6.5" x2="6.5" y2="6.5" stroke="#8a8a8a"/><line x1="1.5" y1="11.5" x2="6.5" y2="11.5" stroke="#8a8a8a"/>
 <rect x="3.5" y="3" width="1" height="2" fill="#3a8a3a"/><rect x="3.5" y="8" width="1" height="2" fill="#3a7ae0"/><rect x="3.5" y="13" width="1" height="2" fill="#e03a3a"/>
 <g fill="#8a8a8a"><rect x="8" y="3.3" width="5" height="1.6"/><rect x="15" y="3.3" width="5" height="1.6"/><rect x="8" y="8.3" width="5" height="1.6"/><rect x="15" y="8.3" width="5" height="1.6"/><rect x="8" y="13.3" width="5" height="1.6"/><rect x="15" y="13.3" width="5" height="1.6"/></g>
</svg>
<svg class="abs" style="left:1646px;top:895px" width="18" height="14" viewBox="0 0 18 14">
 <defs><linearGradient id="ls" x1="0" y1="0" x2="0" y2="1"><stop offset="0" stop-color="#5aa0f0"/><stop offset=".35" stop-color="#cfe3f5"/><stop offset=".6" stop-color="#4b8a5a"/><stop offset="1" stop-color="#2a5aa0"/></linearGradient></defs>
 <rect x="0.75" y="0.75" width="16.5" height="12.5" fill="#fff" stroke="#a8a8a8" stroke-width="1.5"/>
 <rect x="2.5" y="2.5" width="13" height="9" fill="url(#ls)"/>
</svg>
<div id="menu" class="abs"></div>
<div class="t" style="left:314px;top:363.00px;font-size:15px;color:#000;font-weight:bold;letter-spacing:-0.1px;">Open</div>
<div class="t" style="left:314px;top:390.47px;font-size:15px;color:#000;letter-spacing:0.1px;">View Information</div>
<div class="t" style="left:314px;top:417.94px;font-size:15px;color:#000;letter-spacing:-0.15px;">Download Primary File</div>
<div class="t" style="left:314px;top:445.41px;font-size:15px;color:#6d6d6d;letter-spacing:-0.15px;">Check In</div>
<div class="t" style="left:314px;top:472.88px;font-size:15px;color:#000;letter-spacing:-0.15px;">Check Out</div>
<div class="t" style="left:314px;top:500.35px;font-size:15px;color:#000;letter-spacing:-0.15px;">Check Out and Download</div>
<div class="t" style="left:314px;top:527.82px;font-size:15px;color:#000;letter-spacing:-0.15px;">Check Out and Edit</div>
<div class="t" style="left:314px;top:555.29px;font-size:15px;color:#6d6d6d;letter-spacing:-0.15px;">Undo Checkout</div>
<div class="t" style="left:314px;top:582.76px;font-size:15px;color:#6d6d6d;letter-spacing:-0.15px;">Edit</div>
<div class="t" style="left:314px;top:610.23px;font-size:15px;color:#000;letter-spacing:-0.15px;">Revise</div>
<div class="t" style="left:314px;top:637.70px;font-size:15px;color:#000;letter-spacing:-0.15px;">Rename</div>
<div class="t" style="left:314px;top:665.17px;font-size:15px;color:#000;letter-spacing:-0.15px;">Set State</div>
<div class="t" style="left:314px;top:692.64px;font-size:15px;color:#000;letter-spacing:-0.15px;">Delete</div>
<div class="t" style="left:314px;top:720.11px;font-size:15px;color:#000;letter-spacing:-0.15px;">Reassign Life Cycles</div>
<div class="t" style="left:314px;top:747.58px;font-size:15px;color:#000;letter-spacing:-0.15px;">New Promotion Request</div>
<div class="t" style="left:314px;top:775.05px;font-size:15px;color:#000;letter-spacing:-0.15px;">Edit Access Control</div>
<div class="sep" style="top:801px"></div>
<div class="t" style="left:314px;top:811.60px;font-size:15px;color:#000;letter-spacing:-0.17px;">Compare Document Versions</div>
<div class="t" style="left:314px;top:839.30px;font-size:15px;color:#000;letter-spacing:-0.1px;">Compare Documents</div>
<div class="sep" style="top:865px"></div>
<div class="t" style="left:314px;top:875.90px;font-size:15px;color:#000;letter-spacing:-0.2px;">Open File Location</div>
<svg class="abs" style="left:600px;top:348px;overflow:visible" width="44" height="64" viewBox="0 0 44 64">
<path d="M6.3 5.5V50.5L17.6 41.9L26.8 56.5L31.8 52.5L26.3 39.5L37.7 38.3Z" fill="#fbfbfb" stroke="#2a2a2a" stroke-width="2.2" stroke-linejoin="round"/>
<line x1="6.3" y1="5.5" x2="6.3" y2="50.5" stroke="#000" stroke-width="2.4"/>
</svg>
<div id="topbar" class="abs"></div>
<svg class="abs" style="left:950px;top:5px" width="20" height="13" viewBox="0 0 20 13"><path d="M1.8 1.5 L10 9.6 L18.2 1.5" fill="none" stroke="#0f1826" stroke-width="2.5"/></svg>
</body></html>
